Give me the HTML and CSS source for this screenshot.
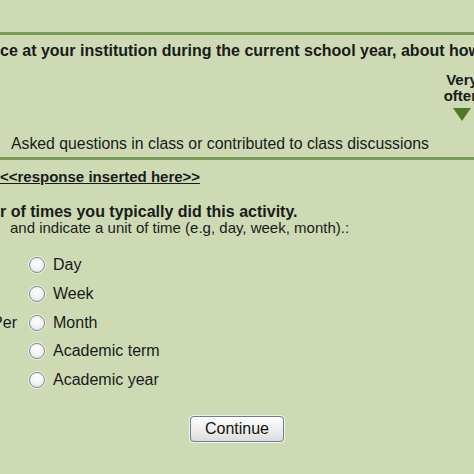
FILE: index.html
```html
<!DOCTYPE html>
<html>
<head>
<meta charset="utf-8">
<link rel="stylesheet" href="styles.css">
</head>
<body>
<div class="page">
  <div class="topband"></div>
  <div class="rule"></div>
  <div class="question">ce at your institution during the current school year, about how often have you done each of the following?</div>
  <div class="scale">
    <div class="scale-col">
      <div class="scale-label">Very<br>often</div>
      <div class="arrow"></div>
    </div>
  </div>
  <div class="item">Asked questions in class or contributed to class discussions</div>
  <div class="rule"></div>
  <div class="response">&lt;&lt;response inserted here&gt;&gt;</div>
  <div class="instr-bold">r of times you typically did this activity.</div>
  <div class="instr">and indicate a unit of time (e.g, day, week, month).:</div>
  <div class="units">
    <div class="per-col"><span class="per">Per</span></div>
    <div class="options">
      <label class="opt"><span class="radio"></span><span>Day</span></label>
      <label class="opt"><span class="radio"></span><span>Week</span></label>
      <label class="opt"><span class="radio"></span><span>Month</span></label>
      <label class="opt"><span class="radio"></span><span>Academic term</span></label>
      <label class="opt"><span class="radio"></span><span>Academic year</span></label>
    </div>
  </div>
  <div class="actions"><button class="btn">Continue</button></div>
</div>
</body>
</html>
```
FILE: styles.css
```css
html, body {
  margin: 0;
  padding: 0;
  background: #cddab4;
  overflow: hidden;
}
.page {
  width: 474px;
  height: 474px;
  font-family: "Liberation Sans", Arial, sans-serif;
  color: #1b1b1b;
  overflow: hidden;
}
.topband {
  height: 32px;
}
.rule {
  height: 3px;
  background: #7b9c58;
}
.question {
  font-weight: bold;
  font-size: 16px;
  line-height: 18px;
  white-space: nowrap;
  padding-top: 7px;
}
.scale {
  display: flex;
  justify-content: flex-end;
  padding-top: 12px;
}
.scale-col {
  width: 40px;
  margin-right: -8px;
  display: flex;
  flex-direction: column;
  align-items: center;
}
.scale-label {
  font-weight: bold;
  font-size: 15px;
  line-height: 16px;
  text-align: center;
  white-space: nowrap;
}
.arrow {
  width: 0;
  height: 0;
  border-left: 9px solid transparent;
  border-right: 9px solid transparent;
  border-top: 13px solid #4e7a28;
  margin-top: 4px;
}
.item {
  font-size: 15.8px;
  line-height: 18px;
  padding-left: 11px;
  padding-top: 14px;
  padding-bottom: 4px;
  white-space: nowrap;
}
.response {
  font-weight: bold;
  font-size: 15px;
  line-height: 18px;
  text-decoration: underline;
  padding-top: 8px;
  white-space: nowrap;
}
.instr-bold {
  font-weight: bold;
  font-size: 16px;
  line-height: 15px;
  padding-top: 18px;
  white-space: nowrap;
}
.instr {
  font-size: 15px;
  line-height: 17px;
  padding-left: 10px;
  white-space: nowrap;
}
.units {
  display: flex;
  align-items: center;
  padding-top: 20px;
}
.per-col {
  width: 17px;
  display: flex;
  justify-content: flex-end;
}
.per {
  font-size: 16px;
  line-height: 18px;
  white-space: nowrap;
}
.options {
  display: flex;
  flex-direction: column;
  gap: 10.75px;
  padding-left: 12px;
}
.opt {
  display: flex;
  align-items: center;
  gap: 8px;
  font-size: 16px;
  line-height: 18px;
  height: 18px;
}
.radio {
  width: 14px;
  height: 14px;
  border-radius: 50%;
  border: 1px solid #858c97;
  background: radial-gradient(circle at 50% 35%, #ffffff 0%, #f1f1f1 55%, #d9d9d9 100%);
  box-shadow: 0 0 0 1px rgba(255,255,255,0.6);
}
.actions {
  display: flex;
  justify-content: center;
  padding-top: 27px;
}
.btn {
  font-family: "Liberation Sans", Arial, sans-serif;
  font-size: 16px;
  color: #111;
  width: 94px;
  height: 26px;
  padding: 0;
  border: 1px solid #6f7c93;
  border-radius: 4px;
  background: linear-gradient(#ffffff, #ededed 55%, #dcdcdc);
  box-shadow: 0 0 0 1px rgba(255,255,255,0.7);
}
```
